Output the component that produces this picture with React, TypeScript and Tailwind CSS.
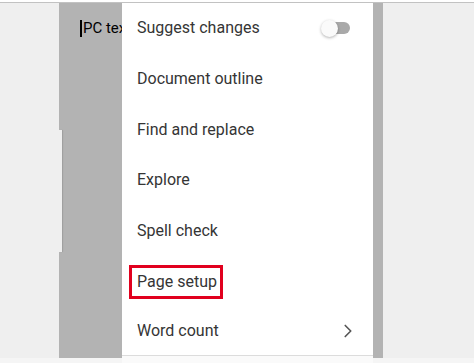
import { ChevronRight } from 'lucide-react';

const items = [
  'Suggest changes',
  'Document outline',
  'Find and replace',
  'Explore',
  'Spell check',
  'Page setup',
  'Word count',
];

function Toggle() {
  return (
    <div className="relative w-[30px] h-[18px] flex items-center">
      <div className="absolute right-[1px] w-[24px] h-[12px] rounded-full bg-[#a9a9a9]" />
      <div className="absolute left-0 w-[17px] h-[17px] rounded-full bg-[#fafafa] shadow-[0_1px_3px_rgba(0,0,0,0.3)]" />
    </div>
  );
}

export default function App() {
  return (
    <div className="w-[474px] h-[363px] bg-[#f5f5f5] flex flex-col overflow-hidden font-['Roboto',sans-serif]">
      <div className="h-[2px] bg-white" />
      <div className="h-px bg-[#c2c2c2]" />

      <div className="flex h-[355px] bg-[#efefef]">
        <div className="w-[59px]" />

        {/* dimmed document behind the menu */}
        <div className="relative w-[324px] bg-[#b3b3b3]">
          <div className="absolute left-0 top-[127px] w-[3px] h-[122px] bg-[#efefef] shadow-[1px_0_1px_rgba(0,0,0,0.12)]" />
          <div className="flex items-center pt-[14px] pl-[21px] text-[15px] text-black">
            <span className="w-[2px] h-[17px] bg-black" />
            <span className="ml-px">PC text</span>
          </div>

          {/* overflow menu */}
          <div className="absolute left-[63px] top-0 w-[251px] h-[360px] bg-white flex flex-col">
            {items.map((label, i) => (
              <div
                key={label}
                className={`flex items-center justify-between pl-[15px] pr-[22px] text-[16px] text-[#353535] ${i === items.length - 1 ? 'h-[48px]' : 'h-[50.7px]'}`}
              >
                {label === 'Page setup' ? (
                  <span className="-ml-[8px] w-[94px] h-[34px] flex items-center border-[3px] border-[#e1001e] pl-[5px]">
                    {label}
                  </span>
                ) : (
                  <span>{label}</span>
                )}
                {i === 0 && <Toggle />}
                {label === 'Word count' && (
                  <ChevronRight size={22} strokeWidth={1.8} className="text-[#555] -mr-[8px]" />
                )}
              </div>
            ))}
            <div className="border-t border-[#dcdcdc] flex-1 bg-[#fafafa]" />
          </div>
        </div>

        <div className="flex-1" />
      </div>
    </div>
  );
}
